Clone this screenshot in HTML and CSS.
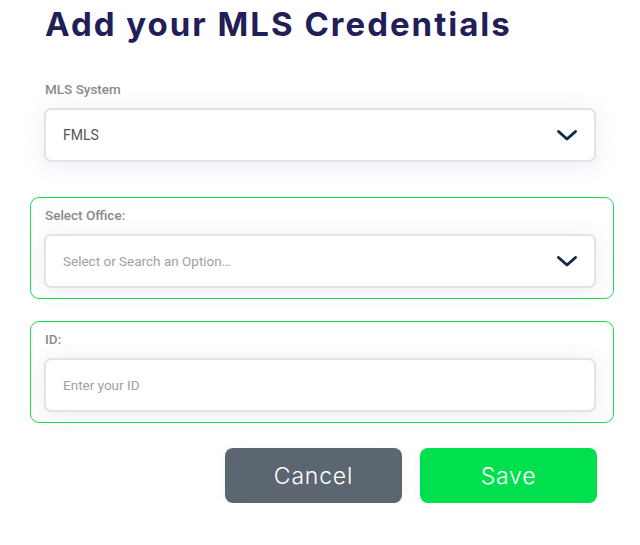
FILE: index.html
```html
<!DOCTYPE html>
<html lang="en">
<head>
<meta charset="utf-8">
<title>Add your MLS Credentials</title>
<link rel="stylesheet" href="styles.css">
</head>
<body>
<div class="page">
  <h1 class="title">Add your MLS Credentials</h1>
  <div class="fields">
    <div class="field">
      <label class="label">MLS System</label>
      <div class="control">
        <span class="value">FMLS</span>
        <svg class="chev" width="22" height="13" viewBox="0 0 22 13"><path d="M2.5 2.5 L11 10 L19.5 2.5" fill="none" stroke="#0f2b45" stroke-width="3" stroke-linecap="round" stroke-linejoin="round"/></svg>
      </div>
    </div>
    <div class="field active">
      <label class="label">Select Office:</label>
      <div class="control">
        <span class="placeholder">Select or Search an Option…</span>
        <svg class="chev" width="22" height="13" viewBox="0 0 22 13"><path d="M2.5 2.5 L11 10 L19.5 2.5" fill="none" stroke="#0f2b45" stroke-width="3" stroke-linecap="round" stroke-linejoin="round"/></svg>
      </div>
    </div>
    <div class="field active">
      <label class="label">ID:</label>
      <div class="control input">
        <span class="placeholder">Enter your ID</span>
      </div>
    </div>
  </div>
  <div class="actions">
    <button class="btn cancel">Cancel</button>
    <button class="btn save">Save</button>
  </div>
</div>
</body>
</html>
```
FILE: styles.css
```css
html, body {
  margin: 0;
  padding: 0;
  background: #ffffff;
}
body {
  font-family: Roboto, "Liberation Sans", sans-serif;
}
.page {
  width: 584px;
  padding: 0 26px 0 30px;
}
.title {
  margin: 0 0 0 15px;
  font-family: Inter, "Liberation Sans", sans-serif;
  font-weight: 700;
  font-size: 33px;
  line-height: 48px;
  color: #221e58;
  letter-spacing: 2px;
}
.fields {
  margin-top: 23px;
  display: flex;
  flex-direction: column;
  gap: 24px;
}
.field {
  border: 1.5px solid transparent;
  border-radius: 9px;
  padding: 9px 17px 10px 13px;
}
.field + .field + .field {
  margin-top: -2px;
}
.field.active {
  border-color: #16e04f;
}
.label {
  display: block;
  font-size: 13.5px;
  line-height: 16px;
  font-weight: 500;
  color: #8a8a8e;
  padding-left: 1px;
  margin-bottom: 11px;
}
.control {
  box-sizing: border-box;
  height: 54px;
  border: 2px solid #e2e2e7;
  border-radius: 7px;
  background: #ffffff;
  box-shadow: 0 3px 22px rgba(110, 100, 170, 0.13);
  display: flex;
  align-items: center;
  justify-content: space-between;
  padding: 0 16px 0 17px;
}
.value {
  font-size: 14px;
  color: #555558;
}
.placeholder {
  font-size: 13.5px;
  font-weight: 400;
  color: #a0a0a4;
}
.chev {
  display: block;
}
.actions {
  display: flex;
  justify-content: flex-end;
  gap: 18px;
  margin-top: 25px;
  padding-right: 17px;
}
.btn {
  width: 177px;
  height: 55px;
  border: none;
  border-radius: 8px;
  font-family: Inter, "Liberation Sans", sans-serif;
  font-weight: 300;
  font-size: 23px;
  letter-spacing: 0.8px;
  color: #ffffff;
  box-shadow: 0 2px 14px rgba(0, 0, 0, 0.05);
}
.cancel {
  background: #5c6670;
}
.save {
  background: #00e04f;
}
```
